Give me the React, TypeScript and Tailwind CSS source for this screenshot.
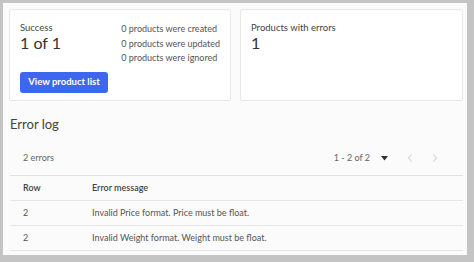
import React from 'react';

const FONT = { fontFamily: 'Lato, "Noto Sans", sans-serif' };

function ErrorRow({ row, message }: { row: string; message: string }) {
  return (
    <div className="flex h-[25px] items-center border-b border-[#e6e6e6] text-[9px] text-[#555]">
      <div className="w-[82px] pl-[13px]">{row}</div>
      <div className="whitespace-nowrap">{message}</div>
    </div>
  );
}

export default function App() {
  return (
    <div
      className="h-[262px] w-[474px] whitespace-nowrap border-b-[7px] border-l-[3px] border-r-[7px] border-t-[3px] border-[#c4c4c4] bg-[#fbfbfb]"
      style={FONT}
    >
      <div className="flex gap-[9px] pl-[6px] pr-[4px] pt-[6px]">
        {/* Import summary */}
        <div className="flex h-[92px] w-[222px] flex-col rounded-[2px] border border-[#e8e8e8] bg-white px-[10px] pt-[11px]">
          <div className="flex">
            <div className="w-[102px]">
              <div className="text-[9.5px] leading-[13px] text-[#444]">Success</div>
              <div className="text-[16px] leading-[18px] text-[#333]">1 of 1</div>
            </div>
            <div className="pt-[1px] text-[9px] leading-[14.5px] text-[#555]">
              <div>0 products were created</div>
              <div>0 products were updated</div>
              <div>0 products were ignored</div>
            </div>
          </div>
          <button
            type="button"
            className="mt-[6px] h-[21px] w-[88px] rounded-[3px] bg-[#3f66ef] text-[9.5px] font-bold text-white"
          >
            View product list
          </button>
        </div>

        <div className="h-[92px] flex-1 rounded-[2px] border border-[#e8e8e8] bg-white px-[10px] pt-[11px]">
          <div className="text-[9.5px] leading-[13px] text-[#444]">Products with errors</div>
          <div className="text-[16px] leading-[18px] text-[#333]">1</div>
        </div>
      </div>

      {/* Error log */}
      <div className="pl-[7px] pr-[4px]">
        <div className="mt-[15px] text-[13px] leading-[16px] text-[#444]">Error log</div>
        <div className="mt-[17px] flex h-[18px] items-center pl-[13px] pr-[25px] text-[9px] text-[#666]">
          <div>2 errors</div>
          <div className="ml-auto flex items-center">
            <span>1 - 2 of 2</span>
            <svg width="8" height="5" viewBox="0 0 8 5" className="ml-[11px]">
              <path d="M0 0h7L3.5 4.5z" fill="#333" />
            </svg>
            <svg width="6" height="8" viewBox="0 0 6 8" className="ml-[18px]" fill="none" stroke="#c8c8c8" strokeWidth="1">
              <path d="M4.5 0.5L1.5 4l3 3.5" />
            </svg>
            <svg width="6" height="8" viewBox="0 0 6 8" className="ml-[19px]" fill="none" stroke="#c8c8c8" strokeWidth="1">
              <path d="M1.5 0.5L4.5 4l-3 3.5" />
            </svg>
          </div>
        </div>
        <div className="mt-[8px] border-t border-[#e2e2e2]">
          <div className="flex h-[25px] items-center border-b border-[#e6e6e6] text-[9px] font-semibold text-[#444]">
            <div className="w-[82px] pl-[13px]">Row</div>
            <div>Error message</div>
          </div>
          <ErrorRow row="2" message="Invalid Price format. Price must be float." />
          <ErrorRow row="2" message="Invalid Weight format. Weight must be float." />
        </div>
      </div>
    </div>
  );
}
